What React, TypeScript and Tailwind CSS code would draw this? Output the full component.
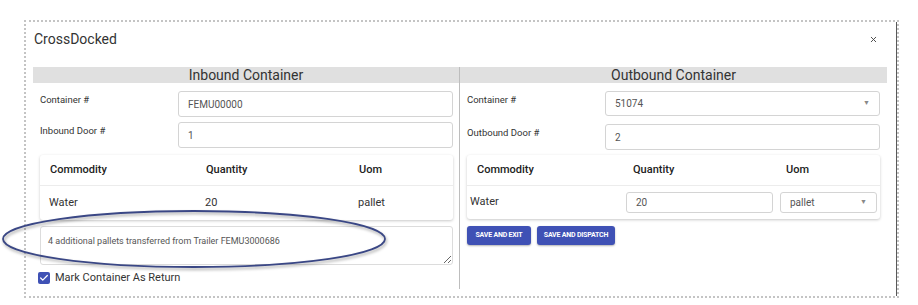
import { Check, X } from "lucide-react";

const font = { fontFamily: "Roboto, 'Noto Sans', Arial, sans-serif" };

const inputBox =
  "flex items-center rounded-[3px] border border-[#d4d4d4] bg-white px-[9px] text-[10px] text-[#555]";

const labelClass = "flex-1 pt-[2px] text-[9.5px] leading-[14px] text-[#333]";

function Caret() {
  return <span className="ml-auto text-[7px] leading-none text-[#888]">▼</span>;
}

function PanelHeader({ title }: { title: string }) {
  return (
    <div className="h-[16px] bg-[#e0e0e0] text-center text-[14px] leading-[16px] text-[#333]">
      {title}
    </div>
  );
}

function Field({
  label,
  value,
  select,
  height,
  top,
}: {
  label: string;
  value: string;
  select?: boolean;
  height: string;
  top: string;
}) {
  return (
    <div className={`flex items-start ${top}`}>
      <span className={labelClass}>{label}</span>
      <div className={`${inputBox} w-[275px] ${height}`}>
        {value}
        {select && <Caret />}
      </div>
    </div>
  );
}

function TableHead() {
  return (
    <div className="grid h-[31px] grid-cols-[156px_153px_1fr] items-center border-b border-[#ececec] pl-[10px] text-[11px] font-medium text-[#222]">
      <span>Commodity</span>
      <span>Quantity</span>
      <span>Uom</span>
    </div>
  );
}

const card = "rounded-[3px] bg-white shadow-[0_1px_3px_rgba(0,0,0,0.22)]";

const btn =
  "h-[19px] rounded-[3px] bg-[#3f51b5] text-[7px] font-bold tracking-[-0.2px] text-white shadow-[0_1px_2px_rgba(0,0,0,0.3)]";

function InboundPanel() {
  return (
    <div className="w-[426px]">
      <PanelHeader title="Inbound Container" />
      <div className="pl-[7px] pr-[6px]">
        <Field label="Container #" value="FEMU00000" height="h-[26px]" top="mt-[8px]" />
        <Field label="Inbound Door #" value="1" height="h-[26px]" top="mt-[5px]" />

        <div className={`mt-[7px] ${card}`}>
          <TableHead />
          <div className="grid h-[34px] grid-cols-[156px_153px_1fr] items-center pl-[9px] text-[11px] text-[#333]">
            <span>Water</span>
            <span>20</span>
            <span>pallet</span>
          </div>
        </div>

        <textarea
          readOnly
          defaultValue="4 additional pallets transferred from Trailer FEMU3000686"
          className="mt-[6px] block h-[39px] w-full resize-y rounded-[3px] border border-[#dcdcdc] px-[7px] pt-[8px] text-[9px] leading-[12px] text-[#555] outline-none"
        />

        <label className="mt-[6px] flex items-center gap-[5px] pb-[4px]">
          <span className="-ml-[2px] flex h-[12px] w-[12px] items-center justify-center rounded-[2px] bg-[#3f51b5]">
            <Check className="h-[10px] w-[10px] text-white" strokeWidth={3} />
          </span>
          <span className="text-[11px] leading-[14px] text-[#333]">
            Mark Container As Return
          </span>
        </label>
      </div>
    </div>
  );
}

function OutboundPanel() {
  return (
    <div className="w-[428px] border-l border-[#bdbdbd]">
      <PanelHeader title="Outbound Container" />
      <div className="pl-[7px] pr-[7px]">
        <Field label="Container #" value="51074" select height="h-[25px]" top="mt-[8px]" />
        <Field label="Outbound Door #" value="2" height="h-[26px]" top="mt-[8px]" />

        <div className={`mt-[5px] ${card}`}>
          <TableHead />
          <div className="flex h-[33px] items-center pl-[3px] text-[11px] text-[#333]">
            <span className="w-[156px]">Water</span>
            <div className={`${inputBox} h-[21px] w-[147px]`}>20</div>
            <div className={`${inputBox} ml-[7px] h-[21px] w-[97px]`}>
              pallet
              <Caret />
            </div>
          </div>
        </div>

        <div className="mt-[7px] flex gap-[6px]">
          <button className={`${btn} w-[64px]`}>SAVE AND EXIT</button>
          <button className={`${btn} w-[78px]`}>SAVE AND DISPATCH</button>
        </div>
      </div>
    </div>
  );
}

export default function App() {
  return (
    <div className="relative h-[305px] w-[918px] overflow-hidden bg-white" style={font}>
      <div className="ml-[24px] mt-[20px] h-[278px] w-[875px] border-2 border-dotted border-[#c4c4c4]">
        <div className="h-full border-r border-[#5a5a5a]">
          <div className="flex items-start pl-[8px] pr-[18px] pt-[7px]">
            <h1 className="text-[14px] leading-[20px] text-[#333]">CrossDocked</h1>
            <X className="ml-auto mt-[6px] h-[9px] w-[9px] text-[#444]" strokeWidth={2.5} />
          </div>
          <div className="ml-[7px] mt-[18px] flex">
            <InboundPanel />
            <OutboundPanel />
          </div>
        </div>
      </div>

      <svg
        className="pointer-events-none absolute left-0 top-0"
        width="918"
        height="305"
        style={{ filter: "drop-shadow(1px 2px 1.5px rgba(0,0,0,0.35))" }}
      >
        <ellipse cx="194" cy="239" rx="191" ry="28" fill="none" stroke="#3a4785" strokeWidth="1.8" />
      </svg>
    </div>
  );
}
